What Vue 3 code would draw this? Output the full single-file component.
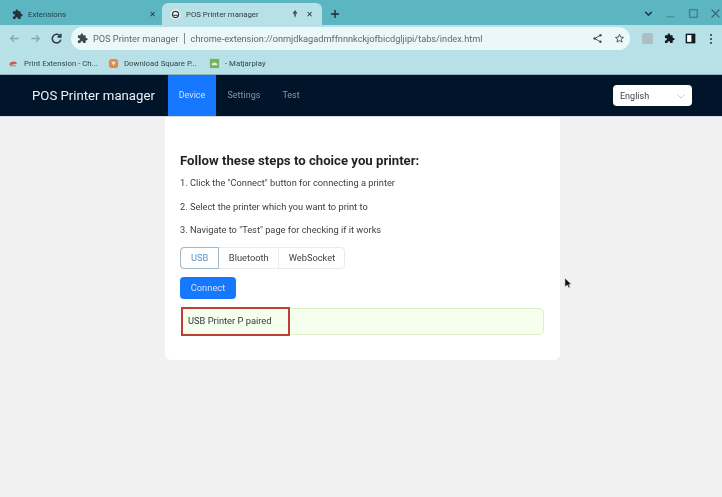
<script setup>
const tabs = [
  { label: 'Extensions', active: false },
  { label: 'POS Printer manager', active: true },
]
const steps = [
  '1. Click the "Connect" button for connecting a printer',
  '2. Select the printer which you want to print to',
  '3. Navigate to "Test" page for checking if it works',
]
const puzzle = 'M20.5 11H19V7c0-1.1-.9-2-2-2h-4V3.5C13 2.12 11.88 1 10.5 1S8 2.12 8 3.5V5H4c-1.1 0-1.99.9-1.99 2v3.8H3.5c1.49 0 2.7 1.21 2.7 2.7s-1.21 2.7-2.7 2.7H2V20c0 1.1.9 2 2 2h3.8v-1.5c0-1.49 1.21-2.7 2.7-2.7s2.7 1.21 2.7 2.7V22H17c1.1 0 2-.9 2-2v-4h1.5c1.38 0 2.5-1.12 2.5-2.5S21.88 11 20.5 11z'
</script>

<template>
  <div class="screen">
    <div class="tabstrip">
      <div class="tab">
        <svg class="ico" viewBox="0 0 24 24"><path :d="puzzle" fill="#26343a" /></svg>
        <span class="tab-label">{{ tabs[0].label }}</span>
        <span class="tab-x">✕</span>
      </div>
      <div class="tab tab-active">
        <svg class="ico" viewBox="0 0 14 14">
          <circle cx="7" cy="7" r="6.5" fill="#f4fbfc" />
          <circle cx="7" cy="7" r="4" fill="none" stroke="#2f3a40" stroke-width="1.6" />
          <path d="M4 8h6" stroke="#2f3a40" stroke-width="1.4" />
        </svg>
        <span class="tab-label">{{ tabs[1].label }}</span>
        <svg class="pin" viewBox="0 0 10 12"><path d="M5 1l3 4-2 1v2l-1 3-1-3V6L2 5z" fill="#40555c" /></svg>
        <span class="tab-x">✕</span>
      </div>
      <svg class="plus" viewBox="0 0 10 10"><path d="M5 1v8M1 5h8" stroke="#1d2d33" stroke-width="1.4" /></svg>
      <div class="win">
        <svg class="win-ico" viewBox="0 0 10 10"><path d="M2 3.5l3 3 3-3" fill="none" stroke="#24414a" stroke-width="1.4" /></svg>
        <svg class="win-ico" viewBox="0 0 10 10"><path d="M1.5 8h7" stroke="#4f858f" stroke-width="1" /></svg>
        <svg class="win-ico" viewBox="0 0 10 10"><rect x="1.5" y="1.5" width="7" height="7" fill="none" stroke="#4b7f89" stroke-width="1.3" /></svg>
        <svg class="win-ico" viewBox="0 0 10 10"><path d="M1.5 1.5l7 7M8.5 1.5l-7 7" stroke="#33656f" stroke-width="1.2" /></svg>
      </div>
    </div>

    <div class="toolbar">
      <svg class="nav" viewBox="0 0 12 12"><path d="M10 6H2.5M5.5 3L2.5 6l3 3" fill="none" stroke="#86a9b0" stroke-width="1.2" /></svg>
      <svg class="nav" viewBox="0 0 12 12"><path d="M2 6h7.5M6.5 3l3 3-3 3" fill="none" stroke="#86a9b0" stroke-width="1.2" /></svg>
      <svg class="nav" viewBox="0 0 12 12"><path d="M9.5 4A4 4 0 1 0 10 7M10 1.500V4.500H7" fill="none" stroke="#2b3b41" stroke-width="1.4" /></svg>
      <div class="omnibox">
        <svg class="ico omni-ico" viewBox="0 0 24 24"><path :d="puzzle" fill="#3a494f" /></svg>
        <span class="omni-title">POS Printer manager</span>
        <span class="omni-sep"></span>
        <span class="omni-url">chrome-extension://onmjdkagadmffnnnkckjofbicdgljipi/tabs/index.html</span>
        <svg class="omni-act" viewBox="0 0 12 12">
          <path d="M9 2.500L3 6l6 3.500" fill="none" stroke="#3c4c52" stroke-width="1" />
          <circle cx="9.2" cy="2.400" r="1.300" fill="#3c4c52" />
          <circle cx="2.800" cy="6" r="1.300" fill="#3c4c52" />
          <circle cx="9.2" cy="9.600" r="1.300" fill="#3c4c52" />
        </svg>
        <svg class="omni-act" viewBox="0 0 12 12"><path d="M6 1.600l1.300 2.900 3.100.3-2.400 2 .8 3.100L6 8.300 3.200 9.900 4 6.800l-2.400-2 3.100-.3z" fill="none" stroke="#3c4c52" stroke-width="1" /></svg>
      </div>
      <div class="ext">
        <span class="ext-grey"></span>
        <svg class="ico" viewBox="0 0 24 24"><path :d="puzzle" fill="#0f1c21" /></svg>
        <svg class="ico" viewBox="0 0 12 12"><rect x="1.5" y="1.5" width="9" height="9" fill="#fff" stroke="#0f1c21" stroke-width="1.6" /><rect x="7" y="2" width="3" height="8" fill="#0f1c21" /></svg>
        <svg class="dots" viewBox="0 0 4 12"><circle cx="2" cy="2" r="1" fill="#25363c" /><circle cx="2" cy="6" r="1" fill="#25363c" /><circle cx="2" cy="10" r="1" fill="#25363c" /></svg>
      </div>
    </div>

    <div class="bookmarks">
      <div class="bm">
        <svg class="bm-ico" viewBox="0 0 12 12"><path d="M2 8a4 3 0 0 1 8-2z" fill="#d9534a" /><path d="M2 8.500h7" stroke="#9a8a86" stroke-width="1" /></svg>
        <span>Print Extension - Ch...</span>
      </div>
      <div class="bm">
        <svg class="bm-ico" viewBox="0 0 12 12"><rect x="1" y="1" width="10" height="10" rx="3" fill="#df8a4a" /><path d="M3.5 4L6 8.500 8.500 4z" fill="#f7e4d0" /></svg>
        <span>Download Square P...</span>
      </div>
      <div class="bm">
        <svg class="bm-ico" viewBox="0 0 12 12"><rect x="1" y="1" width="10" height="10" fill="#72b45c" /><path d="M3 8a3 3 0 0 1 6 0z" fill="#e3f1da" /></svg>
        <span>- Matjarplay</span>
      </div>
    </div>

    <header class="appbar">
      <div class="brand">POS Printer manager</div>
      <nav class="menu">
        <span class="menu-item menu-on">Device</span>
        <span class="menu-item">Settings</span>
        <span class="menu-item">Test</span>
      </nav>
      <div class="select">
        <span>English</span>
        <svg class="chev" viewBox="0 0 10 10"><path d="M1.500 3.500L5 7l3.500-3.500" fill="none" stroke="#c9cdd1" stroke-width="1" /></svg>
      </div>
    </header>

    <main class="page">
      <section class="card">
        <h1 class="title">Follow these steps to choice you printer:</h1>
        <p v-for="s in steps" :key="s" class="step">{{ s }}</p>
        <div class="seg">
          <span class="seg-item seg-on">USB</span>
          <span class="seg-item">Bluetooth</span>
          <span class="seg-item">WebSocket</span>
        </div>
        <button class="connect">Connect</button>
        <div class="alert">
          <span>USB Printer P paired</span>
          <span class="mark"></span>
        </div>
      </section>
      <svg class="cursor" viewBox="0 0 10 14"><path d="M1 1v10l2.600-2.200L5.400 12l1.500-.8L5.300 8.200H8.500z" fill="#111" stroke="#fff" stroke-width=".6" /></svg>
    </main>
  </div>
</template>

<style scoped>
.screen {
  width: 722px;
  height: 497px;
  overflow: hidden;
  display: flex;
  flex-direction: column;
  font-family: Roboto, "Liberation Sans", sans-serif;
  background: #f1f1f1;
  filter: blur(0.35px);
}
.tabstrip {
  height: 25px;
  flex: none;
  background: #5bb6c2;
  display: flex;
  align-items: flex-end;
  padding-left: 8px;
}
.tab {
  height: 22px;
  width: 154px;
  display: flex;
  align-items: center;
  padding: 0 6px 0 4px;
  box-sizing: border-box;
  font-size: 7.8px;
  color: #26404a;
  gap: 5px;
}
.tab-active {
  width: 160px;
  background: #b7e1e6;
  border-radius: 6px 6px 0 0;
  color: #2e4048;
  padding-left: 8px;
  padding-right: 9px;
}
.tab-label { flex: 1; white-space: nowrap; }
.tab-x { font-size: 8px; color: #21333a; font-family: "DejaVu Sans", sans-serif; }
.ico { width: 11px; height: 11px; flex: none; }
.pin { width: 8px; height: 10px; margin-right: 2px; flex: none; }
.plus { width: 10px; height: 10px; margin-left: 8px; margin-bottom: 6px; flex: none; }
.win {
  margin-left: auto;
  display: flex;
  gap: 11.5px;
  padding: 0 1px 6px 0;
}
.win-ico { width: 11px; height: 11px; }
.toolbar {
  height: 27px;
  flex: none;
  background: #b7e1e6;
  display: flex;
  align-items: center;
  padding-left: 8px;
}
.nav { width: 13px; height: 13px; margin-right: 8px; flex: none; }
.omnibox {
  width: 559px;
  height: 23px;
  flex: none;
  background: #eaf8f9;
  border-radius: 12px;
  display: flex;
  align-items: center;
  padding-left: 6px;
  box-sizing: border-box;
  font-size: 9.2px;
  color: #5a6a70;
  white-space: nowrap;
}
.omni-ico { margin-right: 5px; }
.omni-title { margin-right: 5px; }
.omni-sep { width: 1px; height: 11px; background: #7e8e93; margin-right: 6px; }
.omni-url { flex: 1; }
.omni-act { width: 11px; height: 11px; margin: 0 5px 0 6px; flex: none; }
.ext {
  display: flex;
  align-items: center;
  gap: 10.5px;
  margin-left: 12px;
}
.ext-grey { width: 11px; height: 11px; background: #adbfc3; border-radius: 2px; }
.dots { width: 4px; height: 12px; margin-left: 2px; }
.bookmarks {
  height: 22px;
  flex: none;
  background: #b7e1e6;
  display: flex;
  align-items: center;
  padding-left: 8px;
  gap: 9px;
  font-size: 7.8px;
  color: #33474e;
  border-bottom: 1px solid #8fb2bd;
}
.bm { display: flex; align-items: center; gap: 5px; white-space: nowrap; }
.bm:nth-child(1) { width: 91px; }
.bm:nth-child(2) { width: 92px; }
.bm-ico { width: 11px; height: 11px; flex: none; }
.appbar {
  height: 42px;
  box-sizing: border-box;
  flex: none;
  background: #001529;
  display: flex;
  align-items: stretch;
  padding-left: 32px;
  border-bottom: 1px solid #d5dde6;
}
.brand {
  color: #eef1f3;
  font-size: 13.2px;
  line-height: 41px;
  width: 136px;
}
.menu { display: flex; font-size: 9px; color: #8a96a1; }
.menu-item { line-height: 41px; }
.menu-item:nth-child(2) { margin-left: 11.5px; padding-right: 11px; }
.menu-item:nth-child(3) { margin-left: 11px; }
.menu-on {
  width: 48px;
  text-align: center;
  background: #1677ff;
  color: #cfe1f8;
}
.select {
  margin: 10px 30px 0 auto;
  width: 79px;
  height: 21px;
  box-sizing: border-box;
  background: #fff;
  border-radius: 4px;
  display: flex;
  align-items: center;
  justify-content: space-between;
  padding: 0 6px 0 7px;
  font-size: 9px;
  color: #3a3f44;
}
.chev { width: 10px; height: 10px; }
.page {
  flex: 1;
  position: relative;
  display: flex;
  justify-content: center;
  align-items: flex-start;
  padding-left: 3px;
}
.card {
  width: 395px;
  height: 243px;
  background: #fff;
  border-radius: 0 0 6px 6px;
  box-sizing: border-box;
  padding: 36px 15px 0 15px;
}
.title {
  margin: 0;
  font-size: 13.2px;
  line-height: 16px;
  font-weight: 700;
  color: #1f2326;
}
.step {
  margin: 0 0 10.5px;
  font-size: 9.25px;
  line-height: 13px;
  color: #3a3e42;
}
.title + .step { margin-top: 7px; }
.seg {
  display: flex;
  margin-top: 0;
  height: 22px;
  width: 165px;
  box-sizing: border-box;
  border: 1px solid #e8eaec;
  border-radius: 4px;
  font-size: 9.3px;
  color: #3e4347;
}
.seg-item {
  line-height: 20px;
  padding: 0 9.5px;
  border-right: 1px solid #e8eaec;
}
.seg-item:last-child { border-right: 0; }
.seg-on {
  color: #5b92c8;
  margin: -1px 0 -1px -1px;
  padding: 0 10px;
  border: 1px solid #9fb8cc;
  border-radius: 4px 0 0 4px;
}
.connect {
  display: block;
  margin-top: 8px;
  width: 56px;
  height: 22px;
  padding: 0;
  border: 0;
  border-radius: 4px;
  background: #1677ff;
  color: #cfe3fb;
  font: inherit;
  font-size: 9.3px;
}
.alert {
  position: relative;
  margin: 9px 0 0 1px;
  height: 27px;
  width: 363px;
  box-sizing: border-box;
  background: #f6ffed;
  border: 1px solid #dcefc8;
  border-radius: 5px;
  padding-left: 6px;
  font-size: 9.3px;
  line-height: 24px;
  color: #33383b;
}
.mark {
  position: absolute;
  left: -1px;
  top: -2px;
  width: 109px;
  height: 29px;
  box-sizing: border-box;
  border: 2px solid #bf3f36;
}
.cursor {
  position: absolute;
  left: 564px;
  top: 160px;
  width: 9px;
  height: 13px;
}
</style>
